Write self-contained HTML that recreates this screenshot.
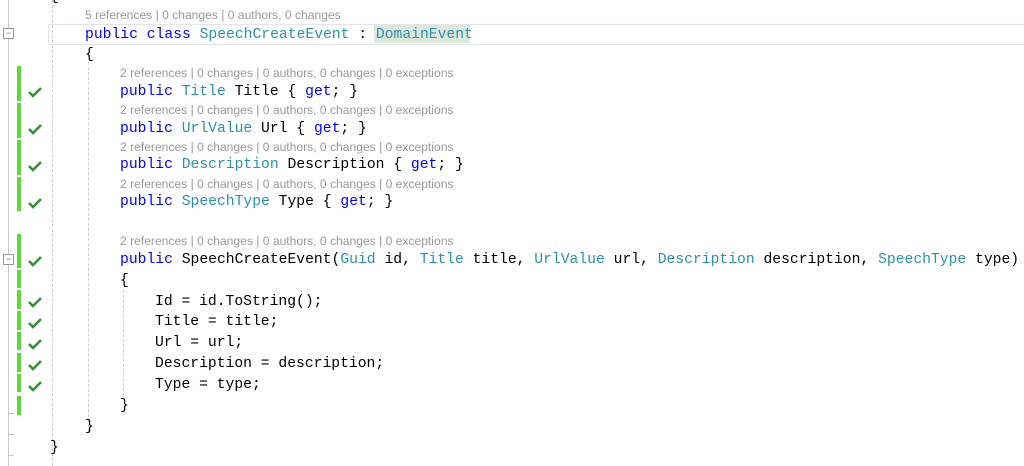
<!DOCTYPE html>
<html><head><meta charset="utf-8"><style>
body{margin:0;width:1024px;height:466px;background:#fff;position:relative;overflow:hidden}
.c{position:absolute;font-family:"Liberation Mono",monospace;font-size:14.7px;color:#000;white-space:pre;line-height:18px;margin-top:2px}
.l{position:absolute;font-family:"Liberation Sans",sans-serif;font-size:12.1px;color:#999;white-space:pre;line-height:14px}
.k{color:#0000ff}.t{color:#2b91af}
.b{position:absolute;left:17px;width:4px;background:#5fd93a}
.v{position:absolute;border-left:1px dashed #ccc;width:0}
</style></head><body>
<div style="position:absolute;left:8px;top:0;width:0;height:466px;border-left:1px solid #c8c8c8"></div>
<div style="position:absolute;left:8px;top:434px;width:6px;border-top:1px solid #c8c8c8"></div>
<div style="position:absolute;left:8px;top:413px;width:6px;border-top:1px solid #c8c8c8"></div>
<div style="position:absolute;left:8px;top:455px;width:6px;border-top:1px solid #c8c8c8"></div>
<div style="position:absolute;left:3px;top:28px;width:9px;height:9px;border:1px solid #999;background:#fff;font:9px/9px sans-serif;text-align:center;color:#666">−</div>
<div style="position:absolute;left:3px;top:254px;width:9px;height:9px;border:1px solid #999;background:#fff;font:9px/9px sans-serif;text-align:center;color:#666">−</div>
<div class="v" style="left:52px;top:0;height:466px"></div>
<div class="v" style="left:88px;top:62px;height:370px"></div>
<div class="v" style="left:123px;top:290px;height:106px"></div>
<div style="position:absolute;left:48px;top:24px;width:980px;height:19px;border:1px solid #e4e4ee"></div>
<div style="position:absolute;left:374px;top:25px;width:96px;height:18px;background:#dfe6dc"></div>

<div class="b" style="top:66px;height:35px"></div><div class="b" style="top:103px;height:35px"></div>
<div class="b" style="top:140px;height:35px"></div><div class="b" style="top:177px;height:34px"></div>
<div class="b" style="top:234px;height:34px"></div><div class="b" style="top:270px;height:18px"></div>
<div class="b" style="top:290px;height:19px"></div><div class="b" style="top:311px;height:19px"></div>
<div class="b" style="top:332px;height:18px"></div><div class="b" style="top:353px;height:19px"></div>
<div class="b" style="top:374px;height:18px"></div><div class="b" style="top:396px;height:19px"></div>

<svg style="position:absolute;left:0;top:0" width="60" height="466">
<g fill="none" stroke="#3a8f3a" stroke-width="2.6">
<path d="M29 92 l4 4 l8 -8"/><path d="M29 129 l4 4 l8 -8"/><path d="M29 166 l4 4 l8 -8"/><path d="M29 203 l4 4 l8 -8"/>
<path d="M29 261 l4 4 l8 -8"/><path d="M29 302 l4 4 l8 -8"/><path d="M29 323 l4 4 l8 -8"/><path d="M29 344 l4 4 l8 -8"/><path d="M29 365 l4 4 l8 -8"/><path d="M29 386 l4 4 l8 -8"/>
</g></svg>

<div class="c" style="left:50px;top:-14px">{</div>
<div class="l" style="left:85px;top:8px">5 references | 0 changes | 0 authors, 0 changes</div>
<div class="c" style="left:85px;top:24px"><span class="k">public class</span> <span class="t">SpeechCreateEvent</span> : <span class="t">DomainEvent</span></div>
<div class="c" style="left:85px;top:44px">{</div>
<div class="l" style="left:120px;top:66px">2 references | 0 changes | 0 authors, 0 changes | 0 exceptions</div>
<div class="c" style="left:120px;top:81px"><span class="k">public</span> <span class="t">Title</span> Title { <span class="k">get</span>; }</div>
<div class="l" style="left:120px;top:103px">2 references | 0 changes | 0 authors, 0 changes | 0 exceptions</div>
<div class="c" style="left:120px;top:118px"><span class="k">public</span> <span class="t">UrlValue</span> Url { <span class="k">get</span>; }</div>
<div class="l" style="left:120px;top:140px">2 references | 0 changes | 0 authors, 0 changes | 0 exceptions</div>
<div class="c" style="left:120px;top:154px"><span class="k">public</span> <span class="t">Description</span> Description { <span class="k">get</span>; }</div>
<div class="l" style="left:120px;top:177px">2 references | 0 changes | 0 authors, 0 changes | 0 exceptions</div>
<div class="c" style="left:120px;top:191px"><span class="k">public</span> <span class="t">SpeechType</span> Type { <span class="k">get</span>; }</div>
<div class="l" style="left:120px;top:234px">2 references | 0 changes | 0 authors, 0 changes | 0 exceptions</div>
<div class="c" style="left:120px;top:249px"><span class="k">public</span> SpeechCreateEvent(<span class="t">Guid</span> id, <span class="t">Title</span> title, <span class="t">UrlValue</span> url, <span class="t">Description</span> description, <span class="t">SpeechType</span> type)</div>
<div class="c" style="left:120px;top:270px">{</div>
<div class="c" style="left:155px;top:291px">Id = id.ToString();</div>
<div class="c" style="left:155px;top:311px">Title = title;</div>
<div class="c" style="left:155px;top:332px">Url = url;</div>
<div class="c" style="left:155px;top:353px">Description = description;</div>
<div class="c" style="left:155px;top:374px">Type = type;</div>
<div class="c" style="left:120px;top:395px">}</div>
<div class="c" style="left:85px;top:416px">}</div>
<div class="c" style="left:50px;top:437px">}</div>
</body></html>
